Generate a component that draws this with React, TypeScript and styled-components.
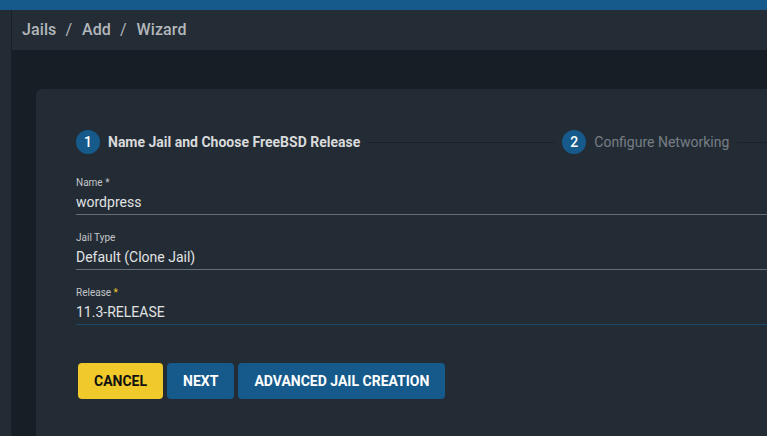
import React from "react";
import styled, {createGlobalStyle} from "styled-components";

const GlobalStyle = createGlobalStyle`
  html, body {
    margin: 0;
    padding: 0;
    background: #181e25;
    font-family: Roboto, "Liberation Sans", sans-serif;
    overflow: hidden;
  }
`

type Step = { num: number, title: string, active: boolean }

const steps: Step[] = [
    {num: 1, title: "Name Jail and Choose FreeBSD Release", active: true},
    {num: 2, title: "Configure Networking", active: false},
]

type Field = { label: string, value: string, required?: boolean, focused?: boolean }

const fields: Field[] = [
    {label: "Name", value: "wordpress", required: true},
    {label: "Jail Type", value: "Default (Clone Jail)"},
    {label: "Release", value: "11.3-RELEASE", required: true, focused: true},
]

export default function App() {
    return (
        <Page>
            <GlobalStyle/>
            <TopBar/>
            <Body>
                <SideNav/>
                <Main>
                    <Breadcrumb>
                        <Crumb>Jails</Crumb>
                        <Slash>/</Slash>
                        <Crumb>Add</Crumb>
                        <Slash>/</Slash>
                        <Crumb>Wizard</Crumb>
                    </Breadcrumb>
                    <Content>
                        <Card>
                            <Stepper>
                                {steps.map((s, i) => (
                                    <React.Fragment key={s.num}>
                                        <StepItem>
                                            <StepNum>{s.num}</StepNum>
                                            <StepTitle $active={s.active}>{s.title}</StepTitle>
                                        </StepItem>
                                        <StepLine $last={i === steps.length - 1}/>
                                    </React.Fragment>
                                ))}
                            </Stepper>
                            <Form>
                                {fields.map(f => (
                                    <FieldBox key={f.label} $focused={f.focused}>
                                        <Label>
                                            {f.label}
                                            {f.required && <Req $focused={f.focused}> *</Req>}
                                        </Label>
                                        <Value>{f.value}</Value>
                                    </FieldBox>
                                ))}
                            </Form>
                            <Buttons>
                                <Button $variant="cancel">Cancel</Button>
                                <Button>Next</Button>
                                <Button>Advanced Jail Creation</Button>
                            </Buttons>
                        </Card>
                    </Content>
                </Main>
            </Body>
        </Page>
    )
}

const Page = styled.div`
  width: 767px;
  height: 436px;
  display: flex;
  flex-direction: column;
  overflow: hidden;
`
const TopBar = styled.div`
  height: 10px;
  flex: 0 0 10px;
  background: #155a8a;
`
const Body = styled.div`
  flex: 1;
  display: flex;
  min-height: 0;
`
const SideNav = styled.aside`
  flex: 0 0 11px;
  background: #232c35;
  border-right: 1px solid #1a2027;
`
const Main = styled.main`
  flex: 1;
  display: flex;
  flex-direction: column;
  min-width: 0;
`
const Breadcrumb = styled.div`
  height: 40px;
  flex: 0 0 40px;
  background: #242d36;
  display: flex;
  align-items: center;
  padding: 0 0 2px 10px;
  box-sizing: border-box;
  font-size: 16px;
  color: #b3b7bb;
`
const Crumb = styled.span`
  font-weight: 500;
  letter-spacing: 0.1px;
`
const Slash = styled.span`
  margin: 0 10px 0 9px;
`
const Content = styled.div`
  flex: 1;
  padding: 39px 0 0 24px;
  min-height: 0;
`
const Card = styled.section`
  background: #232c35;
  border-radius: 6px 0 0 0;
  height: 100%;
  padding: 40px 0 0 40px;
  box-sizing: border-box;
`
const Stepper = styled.div`
  display: flex;
  align-items: center;
  height: 26px;
`
const StepItem = styled.div`
  display: flex;
  align-items: center;
  flex: 0 0 auto;
`
const StepNum = styled.div`
  width: 24px;
  height: 24px;
  border-radius: 50%;
  background: #155a8a;
  color: #ffffff;
  font-size: 14px;
  font-weight: 500;
  display: flex;
  align-items: center;
  justify-content: center;
  margin-right: 8px;
`
const StepTitle = styled.div<{ $active: boolean }>`
  font-size: 14px;
  font-weight: ${p => p.$active ? 700 : 400};
  color: ${p => p.$active ? "#d9dadb" : "#787e85"};
  white-space: nowrap;
`
const StepLine = styled.div<{ $last: boolean }>`
  height: 1px;
  background: #1a2128;
  margin: 0 ${p => p.$last ? "0" : "8px"} 0 8px;
  flex: ${p => p.$last ? "1 1 auto" : "0 0 186px"};
`
const Form = styled.div`
  display: flex;
  flex-direction: column;
  gap: 10px;
  margin-top: 15px;
`
const FieldBox = styled.div<{ $focused?: boolean }>`
  display: flex;
  flex-direction: column;
  height: 45px;
  box-sizing: border-box;
  border-bottom: 1px solid ${p => p.$focused ? "#1b4a6d" : "#676d74"};
  padding-top: 7px;
`
const Label = styled.div`
  font-size: 10px;
  color: #c3c6c9;
  line-height: 12px;
`
const Req = styled.span<{ $focused?: boolean }>`
  color: ${p => p.$focused ? "#f0c92b" : "#c3c6c9"};
`
const Value = styled.div`
  font-size: 14px;
  color: #e1e2e3;
  margin-top: 5px;
  line-height: 17px;
`
const Buttons = styled.div`
  display: flex;
  gap: 4px;
  margin-top: 38px;
  margin-left: 2px;
`
const Button = styled.button<{ $variant?: "cancel" }>`
  height: 36px;
  padding: 0 16px;
  border: none;
  border-radius: 4px;
  font-family: Roboto, "Liberation Sans", sans-serif;
  font-size: 14px;
  font-weight: 700;
  text-transform: uppercase;
  background: ${p => p.$variant === "cancel" ? "#f0c92b" : "#155a8a"};
  color: ${p => p.$variant === "cancel" ? "#111111" : "#ffffff"};
  cursor: pointer;
`
